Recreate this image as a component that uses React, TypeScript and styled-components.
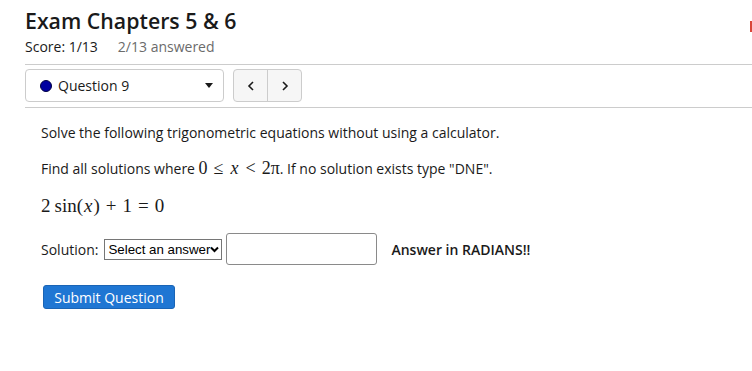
import styled, { createGlobalStyle } from "styled-components";

const GlobalStyle = createGlobalStyle`
  html, body {
    margin: 0;
    padding: 0;
    background: #ffffff;
    font-family: "Open Sans", "Liberation Sans", sans-serif;
    color: #1a1a1a;
  }
`;

const Page = styled.div`
  width: 752px;
  height: 371px;
  overflow: hidden;
  position: relative;
`;

const Header = styled.div`
  padding: 6px 0 0 25px;
`;

const Title = styled.h1`
  margin: 0;
  font-size: 21.3px;
  font-weight: 600;
  line-height: 30px;
  color: #1a1a1a;
`;

const ScoreLine = styled.div`
  display: flex;
  gap: 20px;
  font-size: 14px;
  line-height: 20px;
  margin-top: 1px;
`;

const Muted = styled.span`
  color: #6b6b6b;
`;

const EdgeMark = styled.div`
  position: absolute;
  right: 0;
  top: 21px;
  width: 2px;
  height: 11px;
  background: #d9463a;
`;

const NavBar = styled.div`
  margin: 7px 0 0 25px;
  border-top: 1px solid #cccccc;
  border-bottom: 1px solid #cccccc;
  padding: 4px 0 5px 0;
  display: flex;
  gap: 9px;
`;

const QuestionSelect = styled.div`
  width: 199px;
  height: 33px;
  box-sizing: border-box;
  border: 1px solid #cccccc;
  border-radius: 4px;
  display: flex;
  align-items: center;
  padding: 0 10px 0 14px;
  font-size: 14px;
  gap: 6px;
`;

const Dot = styled.span`
  width: 12px;
  height: 12px;
  border-radius: 50%;
  background: #0000a0;
  border: 1px solid #000044;
  box-sizing: border-box;
`;

const Grow = styled.span`
  flex: 1;
`;

const Caret = styled.span`
  width: 0;
  height: 0;
  border-left: 4px solid transparent;
  border-right: 4px solid transparent;
  border-top: 5px solid #1a1a1a;
`;

const ButtonGroup = styled.div`
  display: flex;
  border: 1px solid #cccccc;
  border-radius: 4px;
  background: #f6f6f6;
  height: 31px;
`;

const NavButton = styled.div<{ $first?: boolean }>`
  width: 33px;
  display: flex;
  align-items: center;
  justify-content: center;
  border-left: ${(p) => (p.$first ? "none" : "1px solid #cccccc")};
`;

const Content = styled.div`
  padding: 15px 0 0 41px;
  font-size: 14px;
`;

const Para = styled.p`
  margin: 0 0 15px 0;
  line-height: 20px;
`;

const Math = styled.span`
  font-family: "Liberation Serif", "DejaVu Serif", serif;
  font-size: 18px;
`;

const Op = styled.span<{ $left?: number; $right?: number }>`
  display: inline-block;
  margin-left: ${(p) => p.$left ?? 6}px;
  margin-right: ${(p) => p.$right ?? 6}px;
`;

const MathLine = styled.div`
  font-family: "Liberation Serif", "DejaVu Serif", serif;
  font-size: 19px;
  line-height: 24px;
  margin-bottom: 15px;
`;

const Var = styled.i`
  font-style: italic;
  padding: 0 1px;
`;

const AnswerRow = styled.div`
  display: flex;
  align-items: center;
  gap: 4px;
  height: 32px;
`;

const Label = styled.span`
  margin-right: 2px;
`;

const SelectWrap = styled.span`
  position: relative;
  display: inline-flex;
`;

const AnswerSelect = styled.select`
  appearance: none;
  font-family: "Liberation Sans", Arial, sans-serif;
  font-size: 13.3px;
  height: 21px;
  width: 118px;
  border: 1px solid #767676;
  border-radius: 0;
  padding: 0 0 0 3px;
  background: #fff;
  color: #000;
`;

const Chevron = styled.svg`
  position: absolute;
  right: 3px;
  top: 7px;
  pointer-events: none;
`;

const AnswerInput = styled.input`
  width: 151px;
  height: 32px;
  box-sizing: border-box;
  border: 1px solid #8a8a8a;
  border-radius: 3px;
  margin-right: 10px;
`;

const Hint = styled.span`
  font-weight: 600;
`;

const SubmitButton = styled.button`
  margin: 20px 0 0 2px;
  width: 132px;
  height: 24px;
  background: #1f76d3;
  color: #ffffff;
  border: 1px solid #1a64b5;
  border-radius: 3px;
  font-family: "Open Sans", "Liberation Sans", sans-serif;
  font-size: 14px;
  padding: 0;
`;

export default function App() {
  return (
    <Page>
      <GlobalStyle />
      <EdgeMark />
      <Header>
        <Title>Exam Chapters 5 &amp; 6</Title>
        <ScoreLine>
          <span>Score: 1/13</span>
          <Muted>2/13 answered</Muted>
        </ScoreLine>
      </Header>
      <NavBar>
        <QuestionSelect>
          <Dot />
          <Grow>Question 9</Grow>
          <Caret />
        </QuestionSelect>
        <ButtonGroup>
          <NavButton $first>
            <svg width="8" height="10" viewBox="0 0 8 10">
              <path d="M6 1 L2 5 L6 9" fill="none" stroke="#1a1a1a" strokeWidth="1.6" />
            </svg>
          </NavButton>
          <NavButton>
            <svg width="8" height="10" viewBox="0 0 8 10">
              <path d="M2 1 L6 5 L2 9" fill="none" stroke="#1a1a1a" strokeWidth="1.6" />
            </svg>
          </NavButton>
        </ButtonGroup>
      </NavBar>
      <Content>
        <Para>Solve the following trigonometric equations without using a calculator.</Para>
        <Para>
          Find all solutions where{" "}
          <Math>
            0<Op>≤</Op>
            <Var>x</Var>
            <Op>&lt;</Op>2π
          </Math>
          . If no solution exists type "DNE".
        </Para>
        <MathLine>
          2<Op $left={4} $right={0}>sin(<Var>x</Var>)</Op>
          <Op $left={6} $right={6}>+</Op>1<Op $left={6} $right={6}>=</Op>0
        </MathLine>
        <AnswerRow>
          <Label>Solution:</Label>
          <SelectWrap>
            <AnswerSelect defaultValue="">
              <option value="">Select an answer</option>
            </AnswerSelect>
            <Chevron width="9" height="7" viewBox="0 0 9 7">
              <path d="M1 1.5 L4.5 5 L8 1.5" fill="none" stroke="#000" strokeWidth="2" />
            </Chevron>
          </SelectWrap>
          <AnswerInput type="text" />
          <Hint>Answer in RADIANS!!</Hint>
        </AnswerRow>
        <SubmitButton>Submit Question</SubmitButton>
      </Content>
    </Page>
  );
}
